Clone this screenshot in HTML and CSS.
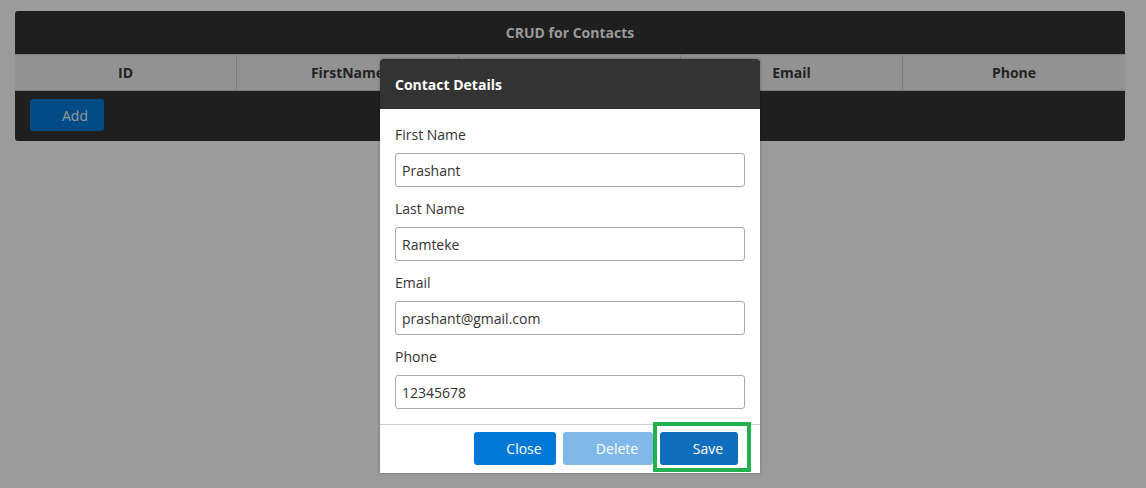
FILE: index.html
```html
<!DOCTYPE html>
<html>
<head>
<meta charset="utf-8">
<link rel="stylesheet" href="styles.css">
</head>
<body>
<div class="page">
  <div class="card">
    <div class="card-title">CRUD for Contacts</div>
    <div class="grid-head">
      <div class="col">ID</div>
      <div class="col">FirstName</div>
      <div class="col">LastName</div>
      <div class="col">Email</div>
      <div class="col">Phone</div>
    </div>
    <div class="toolbar">
      <button class="btn-add">Add</button>
    </div>
  </div>
</div>
<div class="modal">
  <div class="modal-head">Contact Details</div>
  <div class="modal-body">
    <div class="field">
      <label>First Name</label>
      <div class="input">Prashant</div>
    </div>
    <div class="field">
      <label>Last Name</label>
      <div class="input">Ramteke</div>
    </div>
    <div class="field">
      <label>Email</label>
      <div class="input">prashant@gmail.com</div>
    </div>
    <div class="field">
      <label>Phone</label>
      <div class="input">12345678</div>
    </div>
  </div>
  <div class="modal-foot">
    <button class="btn btn-close">Close</button>
    <button class="btn btn-delete">Delete</button>
    <button class="btn btn-save">Save</button>
  </div>
  <div class="highlight"></div>
</div>
</body>
</html>
```
FILE: styles.css
```css
html, body {
  margin: 0;
  padding: 0;
  background: #9b9b9b;
  font-family: "Open Sans", "Liberation Sans", sans-serif;
  font-size: 14px;
}
.page {
  padding: 11px 21px 0 15px;
}
.card {
  background: #1f1f1f;
  border-radius: 3px;
  overflow: hidden;
}
.card-title {
  height: 43px;
  line-height: 43px;
  text-align: center;
  font-weight: 700;
  color: #9a9a9a;
}
.grid-head {
  display: grid;
  grid-template-columns: 221px 222px 222px 222px 1fr;
  background: #929292;
  border-top: 1px solid #7d7d7d;
  border-bottom: 1px solid #7d7d7d;
}
.col {
  height: 35px;
  line-height: 36px;
  text-align: center;
  font-weight: 700;
  color: #232323;
  border-left: 1px solid #7d7d7d;
}
.col:first-child { border-left: none; }
.toolbar {
  height: 50px;
  padding: 8px 15px 0;
  box-sizing: border-box;
}
.btn-add {
  width: 74px;
  height: 32px;
  border: none;
  border-radius: 3px;
  background: #004b85;
  color: #9a9a9a;
  font-family: inherit;
  font-size: 14px;
  padding: 0 0 0 16px;
}
.modal {
  position: absolute;
  left: 380px;
  top: 59px;
  width: 380px;
  background: #fff;
  border-radius: 3px 3px 0 0;
  box-shadow: 0 0 3px rgba(0,0,0,0.35);
}
.modal-head {
  height: 50px;
  line-height: 52px;
  background: #333;
  color: #fff;
  font-weight: 700;
  padding-left: 15px;
  border-radius: 3px 3px 0 0;
}
.modal-body {
  padding: 16px 15px 3px;
}
.field {
  display: flex;
  flex-direction: column;
  margin-bottom: 12px;
}
.field label {
  line-height: 19px;
  color: #333;
  margin-bottom: 9px;
}
.input {
  height: 32px;
  line-height: 34px;
  border: 1px solid #a9a9a9;
  border-radius: 3px;
  padding-left: 6px;
  color: #333;
}
.modal-foot {
  border-top: 1px solid #cfcfcf;
  display: flex;
  justify-content: flex-end;
  gap: 7px;
  padding: 7px 22px 8px 0;
}
.btn {
  height: 33px;
  border: none;
  border-radius: 3px;
  color: #fff;
  font-family: inherit;
  font-size: 14px;
  padding: 0 0 0 18px;
}
.btn-close { width: 82px; background: #0078d7; }
.btn-delete { width: 90px; background: #80b9e9; }
.btn-save { width: 78px; background: #106ebe; }
.highlight {
  position: absolute;
  left: 273px;
  top: 363px;
  width: 90px;
  height: 42px;
  border: 4px solid #22b14c;
}
```
